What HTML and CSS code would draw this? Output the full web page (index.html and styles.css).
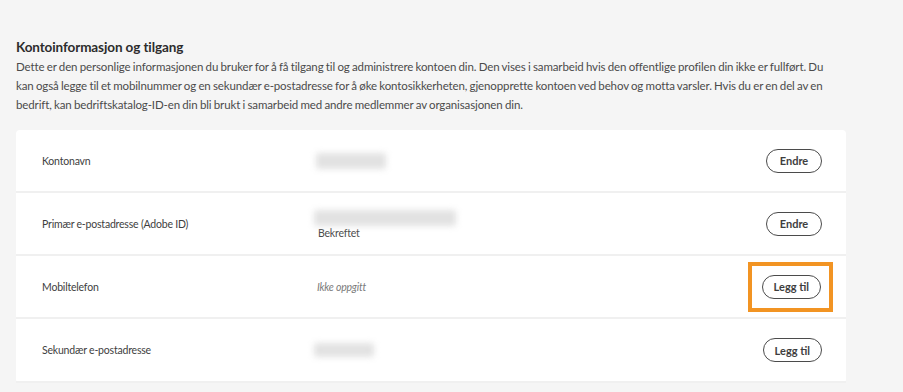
FILE: index.html
```html
<!DOCTYPE html>
<html lang="no">
<head>
<meta charset="utf-8">
<title>Kontoinformasjon og tilgang</title>
<link rel="stylesheet" href="styles.css">
</head>
<body>
<section class="section">
  <h2 class="title">Kontoinformasjon og tilgang</h2>
  <p class="intro">Dette er den personlige informasjonen du bruker for å få tilgang til og administrere kontoen din. Den vises i samarbeid hvis den offentlige profilen din ikke er fullført. Du<br>kan også legge til et mobilnummer og en sekundær e-postadresse for å øke kontosikkerheten, gjenopprette kontoen ved behov og motta varsler. Hvis du er en del av en<br>bedrift, kan bedriftskatalog-ID-en din bli brukt i samarbeid med andre medlemmer av organisasjonen din.</p>
  <div class="card">
    <div class="row">
      <div class="label">Kontonavn</div>
      <div class="value"><span class="blur blur-name"></span></div>
      <div class="action"><button class="btn">Endre</button></div>
    </div>
    <div class="row">
      <div class="label">Primær e-postadresse (Adobe ID)</div>
      <div class="value value-stack"><span class="blur blur-email"></span><span class="status">Bekreftet</span></div>
      <div class="action"><button class="btn">Endre</button></div>
    </div>
    <div class="row">
      <div class="label">Mobiltelefon</div>
      <div class="value"><span class="empty">Ikke oppgitt</span></div>
      <div class="action"><span class="highlight"><button class="btn">Legg til</button></span></div>
    </div>
    <div class="row">
      <div class="label">Sekundær e-postadresse</div>
      <div class="value"><span class="blur blur-second"></span></div>
      <div class="action"><button class="btn">Legg til</button></div>
    </div>
  </div>
</section>
</body>
</html>
```

FILE: styles.css
```css
* { box-sizing: border-box; }
html, body { margin: 0; padding: 0; }
body {
  background: #f5f5f5;
  font-family: Lato, "Open Sans", sans-serif;
  color: #4b4b4b;
  height: 392px;
  overflow: hidden;
}
.section { padding: 38px 0 0 16px; width: 846px; }
.title {
  margin: 0;
  font-size: 13.5px;
  font-weight: 700;
  color: #2c2c2c;
  line-height: 18px;
  letter-spacing: -0.1px;
}
.intro {
  margin: 1px 0 16px;
  font-size: 11.5px;
  line-height: 19px;
  letter-spacing: -0.12px;
  word-spacing: -0.5px;
  color: #4b4b4b;
  width: 860px;
}
.card {
  background: #fff;
  border-radius: 4px;
  width: 830px;
}
.row {
  display: grid;
  grid-template-columns: 270px 1fr auto;
  align-items: center;
  height: 63px;
  padding: 0 24px 0 26px;
  border-bottom: 2px solid #f0f0f0;
  font-size: 10.5px;
  letter-spacing: -0.2px;
}
.row:last-child { height: 64px; }
.label { color: #3e3e3e; }
.value { display: flex; align-items: center; }
.value-stack { flex-direction: column; align-items: flex-start; padding-top: 2px; }
.blur {
  display: block;
  background: #e2e2e2;
  filter: blur(3px);
  border-radius: 2px;
}
.blur-name { width: 70px; height: 16px; margin-left: 4px; }
.blur-email { width: 142px; height: 16px; margin-left: 2px; }
.blur-second { width: 60px; height: 14px; margin-left: 2px; }
.status { margin: 1px 0 0 6px; color: #4b4b4b; }
.empty { font-style: italic; color: #7a7a7a; margin-left: 5px; }
.action { display: flex; justify-content: flex-end; }
.btn {
  font-family: Lato, "Open Sans", sans-serif;
  font-size: 11px;
  font-weight: 700;
  color: #3e3e3e;
  background: #fff;
  border: 1.5px solid #4b4b4b;
  border-radius: 12px;
  height: 24px;
  padding: 0 11px;
  min-width: 56px;
}
.highlight {
  display: inline-flex;
  border: 4px solid #f29423;
  padding: 9px 8px 9px 10px;
  margin: 0 -11px 0 0;
}
```
